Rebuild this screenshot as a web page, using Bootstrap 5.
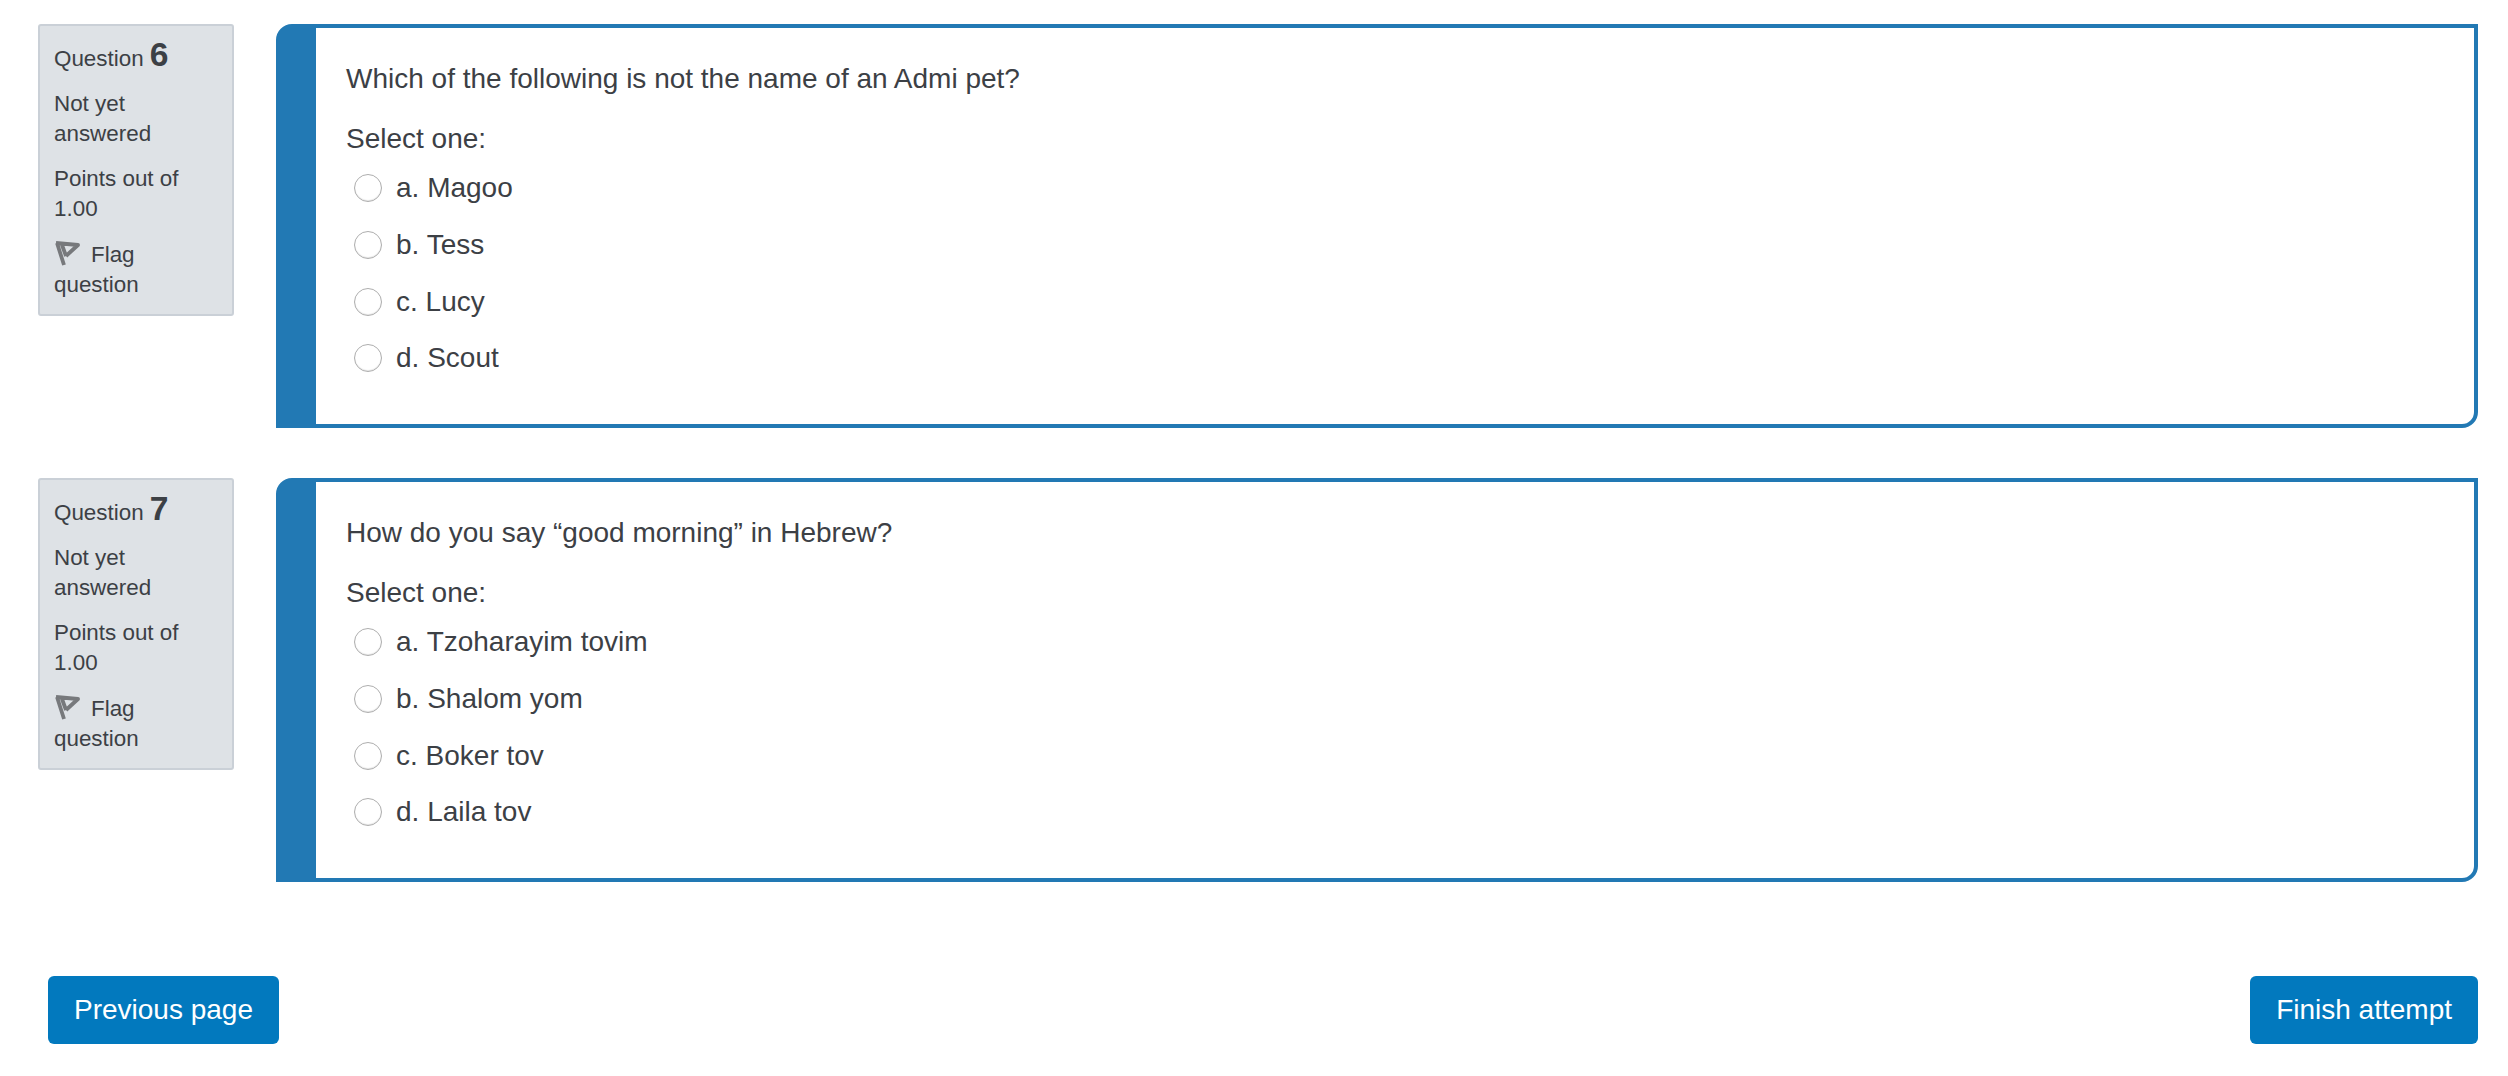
<!DOCTYPE html>
<html lang="en">
<head>
  <meta charset="utf-8">
  <title>Quiz attempt</title>
  <link href="https://cdn.jsdelivr.net/npm/bootstrap@5.3.3/dist/css/bootstrap.min.css" rel="stylesheet">
  <style>
    body {
      font-family: "Liberation Sans", Arial, sans-serif;
      color: #3c4045;
      background: #fff;
    }
    .quiz-page {
      padding: 24px 30px 0 38px;
    }
    .question-row {
      gap: 42px;
      margin-bottom: 50px;
    }
    .question-row:last-of-type {
      margin-bottom: 0;
    }
    .info-box {
      flex: 0 0 196px;
      height: 292px;
      padding: 15px 14px 0 14px;
      background: #dee2e6;
      border: 2px solid #cad0d7;
      border-radius: 3px;
      font-size: 22.4px;
      line-height: 30px;
    }
    .info-box p {
      margin: 0 0 15.5px 0;
    }
    .info-box p:first-child {
      margin-bottom: 14.5px;
    }
    .qno {
      font-size: 33.6px;
      font-weight: 700;
      line-height: 28px;
    }
    .flag-icon {
      width: 26px;
      height: 26px;
      margin-right: 11px;
      vertical-align: -5px;
    }
    .question-body {
      flex: 1 1 auto;
      min-width: 0;
      height: 404px;
      padding: 31px 30px 0 30px;
      border: 4px solid #2279b4;
      border-left-width: 40px;
      border-radius: 16px 0 16px 0;
      font-size: 28px;
      line-height: 40px;
    }
    .question-row:last-of-type .question-body {
      height: 402px;
    }
    .question-body p {
      margin: 0 0 20px 0;
    }
    .answer-label {
      line-height: 40px;
      margin-bottom: 1px;
    }
    .answer-row {
      height: 56px;
      padding-left: 8px;
      gap: 14px;
    }
    .answer-row.tall-row {
      height: 58px;
    }
    .answer-row .form-check-input {
      width: 28px;
      height: 28px;
      margin: 0;
      flex: none;
      background-color: #fff;
      border: 1px solid #aeaeae;
      box-shadow: inset 0 -1px 1px rgba(0,0,0,.1);
    }
    .nav-row {
      margin-top: 94px;
      padding-left: 10px;
    }
    .page-btn {
      height: 68px;
      padding: 0 26px;
      font-size: 28px;
      line-height: 68px;
      color: #fff;
      background: #0279be;
      border: 0;
      border-radius: 6px;
    }
  </style>
</head>
<body>
  <div class="quiz-page">

    <!-- Question 6 -->
    <div class="d-flex align-items-start question-row">
      <div class="info-box">
        <p>Question <span class="qno">6</span></p>
        <p>Not yet answered</p>
        <p>Points out of 1.00</p>
        <div><svg class="flag-icon" viewBox="0 0 26 26"><path d="M2 2 L24 4 L12 15 M3 2 L10 24 M8 4 L12 15" fill="none" stroke="#77797c" stroke-width="3.8" stroke-linejoin="round"/></svg>Flag question</div>
      </div>
      <div class="question-body">
        <p>Which of the following is not the name of an Admi pet?</p>
        <div class="answer-label">Select one:</div>
        <div class="d-flex align-items-center answer-row"><input class="form-check-input" type="radio" name="q6" id="q6a"><label for="q6a">a. Magoo</label></div>
        <div class="d-flex align-items-center answer-row tall-row"><input class="form-check-input" type="radio" name="q6" id="q6b"><label for="q6b">b. Tess</label></div>
        <div class="d-flex align-items-center answer-row"><input class="form-check-input" type="radio" name="q6" id="q6c"><label for="q6c">c. Lucy</label></div>
        <div class="d-flex align-items-center answer-row"><input class="form-check-input" type="radio" name="q6" id="q6d"><label for="q6d">d. Scout</label></div>
      </div>
    </div>

    <!-- Question 7 -->
    <div class="d-flex align-items-start question-row">
      <div class="info-box">
        <p>Question <span class="qno">7</span></p>
        <p>Not yet answered</p>
        <p>Points out of 1.00</p>
        <div><svg class="flag-icon" viewBox="0 0 26 26"><path d="M2 2 L24 4 L12 15 M3 2 L10 24 M8 4 L12 15" fill="none" stroke="#77797c" stroke-width="3.8" stroke-linejoin="round"/></svg>Flag question</div>
      </div>
      <div class="question-body">
        <p>How do you say “good morning” in Hebrew?</p>
        <div class="answer-label">Select one:</div>
        <div class="d-flex align-items-center answer-row"><input class="form-check-input" type="radio" name="q7" id="q7a"><label for="q7a">a. Tzoharayim tovim</label></div>
        <div class="d-flex align-items-center answer-row tall-row"><input class="form-check-input" type="radio" name="q7" id="q7b"><label for="q7b">b. Shalom yom</label></div>
        <div class="d-flex align-items-center answer-row"><input class="form-check-input" type="radio" name="q7" id="q7c"><label for="q7c">c. Boker tov</label></div>
        <div class="d-flex align-items-center answer-row"><input class="form-check-input" type="radio" name="q7" id="q7d"><label for="q7d">d. Laila tov</label></div>
      </div>
    </div>

    <div class="d-flex justify-content-between nav-row">
      <button class="btn page-btn" type="button">Previous page</button>
      <button class="btn page-btn" type="button">Finish attempt</button>
    </div>
  </div>

  <script src="https://cdn.jsdelivr.net/npm/bootstrap@5.3.3/dist/js/bootstrap.bundle.min.js"></script>
</body>
</html>
